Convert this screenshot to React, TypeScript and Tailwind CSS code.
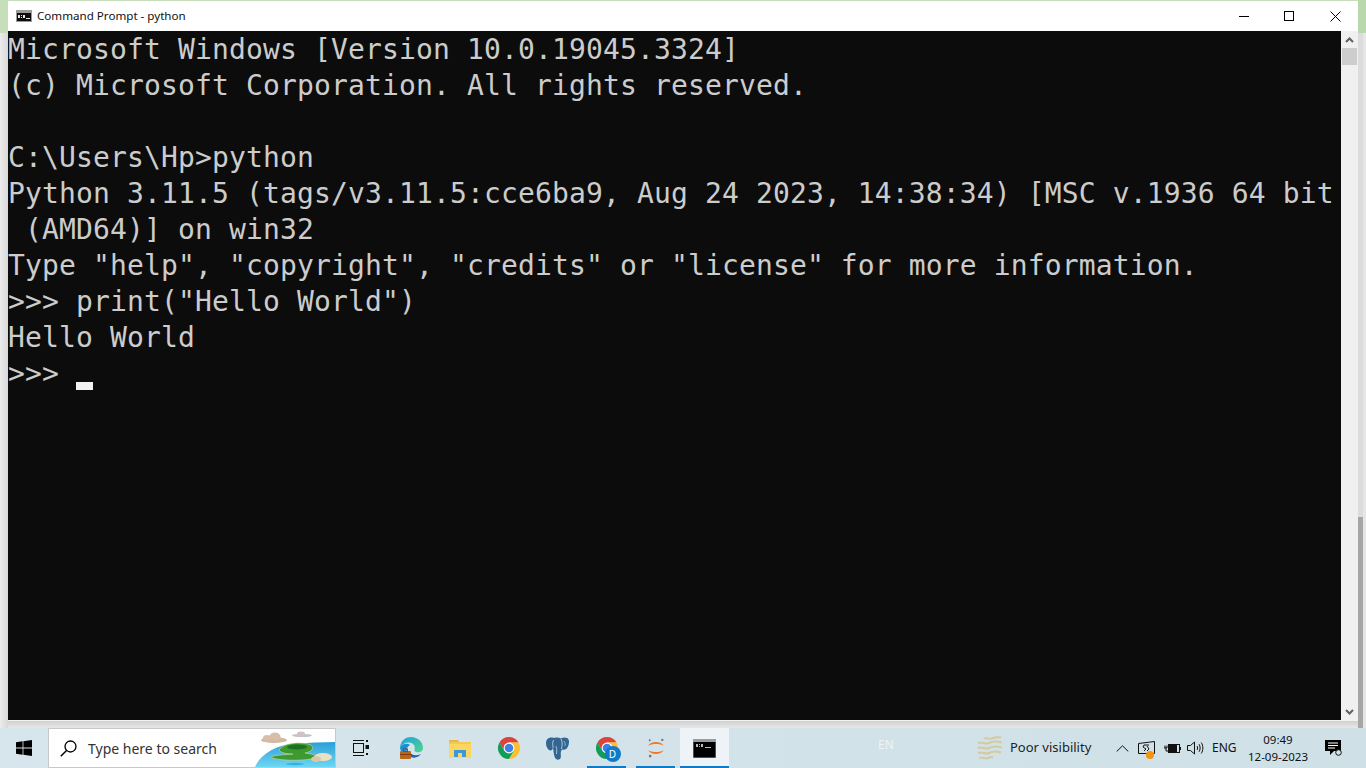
import React from 'react';

const lines = [
  'Microsoft Windows [Version 10.0.19045.3324]',
  '(c) Microsoft Corporation. All rights reserved.',
  '',
  'C:\\Users\\Hp>python',
  'Python 3.11.5 (tags/v3.11.5:cce6ba9, Aug 24 2023, 14:38:34) [MSC v.1936 64 bit',
  ' (AMD64)] on win32',
  'Type "help", "copyright", "credits" or "license" for more information.',
  '>>> print("Hello World")',
  'Hello World',
];

const ChromeIcon: React.FC<{ size?: number }> = ({ size = 24 }) => (
  <svg width={size} height={size} viewBox="0 0 24 24">
    <path d="M12 1A11 11 0 0 1 21.53 6.5L12 6.5 7.24 14.75 2.47 6.5A11 11 0 0 1 12 1Z" fill="#db4437" />
    <path d="M21.53 6.5A11 11 0 0 1 12 23L16.76 14.75 12 6.5Z" fill="#fbc02d" />
    <path d="M12 23A11 11 0 0 1 2.47 6.5L7.24 14.75 16.76 14.75Z" fill="#0f9d58" />
    <circle cx="12" cy="12" r="5.4" fill="#fff" />
    <circle cx="12" cy="12" r="4.3" fill="#3f7fe8" />
  </svg>
);

const TaskButton: React.FC<{ children: React.ReactNode; running?: boolean; active?: boolean }> = ({
  children,
  running,
  active,
}) => (
  <div className={`relative flex h-10 w-[49px] items-center justify-center ${active ? 'bg-[#edf3f6]' : ''}`}>
    {children}
    {running && (
      <div className={`absolute bottom-0 h-[2px] bg-[#0f7bc8] ${active ? 'inset-x-0' : 'inset-x-[5px]'}`}></div>
    )}
  </div>
);

export default function App() {
  return (
    <div className="flex h-[768px] w-[1366px] flex-col overflow-hidden bg-[#e4e4e4] font-['Noto_Sans',sans-serif]">
      <div className="flex h-[728px]">
        {/* left edge of the desktop */}
        <div className="flex w-2 flex-col">
          <div className="h-[33px] bg-[#c6dfba]"></div>
          <div className="flex-1 bg-gradient-to-r from-[#ececec] to-[#d8d8d8]"></div>
        </div>

        {/* window */}
        <div className="flex w-[1350px] flex-col">
          <div className="h-px bg-[#c6dfba]"></div>
          <div className="flex h-[30px] items-center bg-white">
            <svg width="16" height="12" viewBox="0 0 16 12" className="ml-2 mr-[5px]">
              <rect width="16" height="12" fill="#9a9a9a" />
              <rect x="1" y="3" width="14" height="8" fill="#0c0c0c" />
              <rect x="2" y="5" width="2" height="3" fill="#e8e8e8" />
              <rect x="5" y="5" width="1" height="1" fill="#e8e8e8" />
              <rect x="5" y="7" width="1" height="1" fill="#e8e8e8" />
              <rect x="7" y="5" width="2" height="3" fill="#e8e8e8" />
              <rect x="10" y="8" width="4" height="1" fill="#e8e8e8" />
            </svg>
            <span className="text-[11.6px] text-[#111]">Command Prompt - python</span>
            <div className="ml-auto flex items-center">
              <svg width="10" height="10" viewBox="0 0 10 10" className="mr-[35px]">
                <rect y="5" width="10" height="1" fill="#000" />
              </svg>
              <svg width="10" height="10" viewBox="0 0 10 10" className="mr-[36px]">
                <rect x="0.5" y="0.5" width="9" height="9" fill="none" stroke="#000" />
              </svg>
              <svg width="11" height="11" viewBox="0 0 11 11" className="mr-[17px]">
                <path d="M0.5 0.5L10.5 10.5M10.5 0.5L0.5 10.5" stroke="#000" strokeWidth="1" fill="none" />
              </svg>
            </div>
          </div>
          <div className="flex h-[689px]">
            <div className="flex-1 whitespace-pre bg-[#0c0c0c] pt-px font-['DejaVu_Sans_Mono',monospace] text-[28px] leading-[36px] tracking-[0.14px] text-[#cccccc]">
              {lines.map((line, i) => (
                <div key={i} className="h-9">
                  {line}
                </div>
              ))}
              <div className="flex h-9">
                <span>{'>>> '}</span>
                <span className="mb-[2px] h-2 w-[17px] self-end bg-[#f2f2f2]"></span>
              </div>
            </div>
            {/* scrollbar */}
            <div className="flex w-[17px] flex-col items-center bg-[#f0f0f0]">
              <div className="flex h-[17px] items-center justify-center">
                <svg width="9" height="6" viewBox="0 0 9 6">
                  <path d="M1 5L4.5 1.5 8 5" stroke="#606060" strokeWidth="2" fill="none" />
                </svg>
              </div>
              <div className="h-[17px] w-[15px] bg-[#cdcdcd]"></div>
              <div className="mt-auto flex h-[17px] items-center justify-center">
                <svg width="9" height="6" viewBox="0 0 9 6">
                  <path d="M1 1L4.5 4.5 8 1" stroke="#606060" strokeWidth="2" fill="none" />
                </svg>
              </div>
            </div>
          </div>
          <div className="h-px bg-[#f2f2f2]"></div>
          <div className="flex-1 bg-gradient-to-b from-[#d0d0d0] to-[#e8e8e8]"></div>
        </div>

        {/* right edge of the desktop */}
        <div className="flex w-2 flex-col">
          <div className="h-[33px] bg-[#b9d8ac]"></div>
          <div className="flex flex-1 flex-col bg-[#e6e6e6]">
            <div className="h-[484px] w-[5px] bg-[#dcdcdc]"></div>
            <div className="w-[5px] flex-1 bg-[#a6a6a6]"></div>
          </div>
        </div>
      </div>

      {/* taskbar */}
      <div className="flex h-10 items-center bg-gradient-to-r from-[#d7e5ec] to-[#cfe0e7]">
        <div className="flex h-10 w-12 items-center justify-center">
          <svg width="16" height="16" viewBox="0 0 16 16">
            <path d="M0 2.2L6.6 1.3V7.6H0ZM7.4 1.2L16 0V7.6H7.4ZM0 8.4H6.6V14.7L0 13.8ZM7.4 8.4H16V16L7.4 14.8Z" fill="#000" />
          </svg>
        </div>

        {/* search box */}
        <div className="relative flex h-10 w-[288px] items-center overflow-hidden border border-[#c6c9cb] bg-white">
          <svg width="17" height="17" viewBox="0 0 17 17" className="ml-[11px]">
            <circle cx="10.5" cy="6.5" r="5.5" fill="none" stroke="#000" strokeWidth="1.3" />
            <path d="M6.5 10.5L0.8 16.2" stroke="#000" strokeWidth="1.5" />
          </svg>
          <span className="ml-[11px] text-[14px] text-[#333]">Type here to search</span>
          <svg width="80" height="39" viewBox="0 0 80 39" className="absolute bottom-0 right-0">
            <defs>
              <linearGradient id="sea" x1="0" y1="0" x2="0" y2="1">
                <stop offset="0" stopColor="#2a9fd8" />
                <stop offset="1" stopColor="#6fd6f2" />
              </linearGradient>
            </defs>
            <ellipse cx="19" cy="12" rx="13" ry="3" fill="#d2b8a2" />
            <ellipse cx="20" cy="8.5" rx="5.5" ry="4" fill="#d8bda8" />
            <ellipse cx="12" cy="10" rx="4" ry="3" fill="#d8bda8" />
            <ellipse cx="47" cy="7.5" rx="10" ry="1.6" fill="#c8c2c4" />
            <ellipse cx="46" cy="5.5" rx="4" ry="2" fill="#cfc4c2" />
            <path d="M0 39C5 27 20 17 40 15.5 54 14.5 68 14.5 80 14V39Z" fill="url(#sea)" />
            <path d="M24 22C28 15 46 13 56 17 60 20 56 24 50 25 56 26 64 27 60 30 50 33 28 33 17 30 15 27 28 27 38 26 32 26 26 25 24 22Z" fill="#3c9a2e" stroke="#d8d59a" strokeWidth="0.6" />
            <ellipse cx="42" cy="19" rx="10" ry="2.5" fill="#1f6f22" />
            <ellipse cx="68" cy="29" rx="9" ry="4" fill="#ece0c4" />
            <ellipse cx="61" cy="31" rx="5" ry="3" fill="#d9c8a4" />
            <ellipse cx="40" cy="36" rx="9" ry="1.2" fill="#39aee0" />
          </svg>
        </div>

        {/* task view */}
        <div className="flex h-10 w-[50px] items-center justify-center">
          <svg width="16" height="16" viewBox="0 0 16 16" fill="none" stroke="#111" strokeWidth="1">
            <path d="M0 0.5H11M0 15.5H11" />
            <rect x="0.5" y="3.5" width="10" height="9" />
            <rect x="13" y="0" width="2" height="2" fill="#111" stroke="none" />
            <rect x="12.5" y="5" width="3.5" height="4" fill="#111" stroke="none" />
            <rect x="13" y="13" width="2" height="2" fill="#111" stroke="none" />
          </svg>
        </div>

        <TaskButton>
          <svg width="24" height="24" viewBox="0 0 24 24">
            <defs>
              <linearGradient id="edgeA" x1="0" y1="0" x2="1" y2="1">
                <stop offset="0" stopColor="#1f9fe0" />
                <stop offset="1" stopColor="#4fd68a" />
              </linearGradient>
            </defs>
            <path d="M1 11C2 4 7 1 12 1 19 1 24 6 24 12 24 16 20 17 17 16 14 15 17 12 15 9 12 5 5 6 1 11Z" fill="url(#edgeA)" />
            <path d="M1 11C4 7 9 7 11 9 7 11 7 16 9 19 5 19 1 16 1 11Z" fill="#1a8fd8" />
            <path d="M9 19C14 24 20 21 22 18 18 20 13 20 11 16Z" fill="#1565b8" />
            <rect x="1" y="15" width="11" height="8" rx="1" fill="#b9651b" />
            <rect x="4.5" y="13" width="4" height="2.5" fill="none" stroke="#8d4b12" />
            <rect x="1" y="18" width="11" height="1" fill="#7a3f0e" />
          </svg>
        </TaskButton>
        <TaskButton>
          <svg width="22" height="19" viewBox="0 0 22 19">
            <path d="M0 1H9L10 3H0Z" fill="#e8b93e" />
            <rect y="3" width="22" height="16" fill="#fbd661" />
            <rect y="3" width="22" height="2" fill="#f4c950" />
            <path d="M5 11H17V18H13V14H9V18H5Z" fill="#3d97dc" />
          </svg>
        </TaskButton>
        <TaskButton>
          <ChromeIcon />
        </TaskButton>
        <TaskButton>
          <svg width="23" height="23" viewBox="0 0 23 23">
            <path d="M6 0.5C2 0.5 0 2.5 0 6 0 9.5 2 13.5 4.5 13.5 6 13.5 6.5 12 7 11 7.5 14 7.8 17 8.5 19.5 9 22 11 23 13 22.5 15 22 15 19.5 14.8 17.5 14.7 15 15 14 16 12.5 18.5 13.5 21 12 22 9.5 23.5 6 23.5 2 21 1 19 0 17 0.5 15 1.5 13 0.3 10 0.3 8.5 1 8 0.7 7 0.5 6 0.5Z" fill="#336791" />
            <path d="M7.5 3C6 6 7 9 7.2 11M15 2C17 5 16 9 15.5 12M9.5 9C10.8 10 11 12 10.5 17" stroke="#cfdde8" strokeWidth="0.8" fill="none" />
            <path d="M18 4C19 6 19.5 7 19 9" stroke="#cfdde8" strokeWidth="0.6" fill="none" />
          </svg>
        </TaskButton>
        <TaskButton running>
          <div className="relative h-6 w-6">
            <ChromeIcon />
            <div className="absolute -bottom-[2px] -right-[2px] flex h-4 w-4 items-center justify-center rounded-full bg-[#0f7bc8] text-[10px] text-white">
              D
            </div>
          </div>
        </TaskButton>
        <TaskButton running>
          <svg width="18" height="22" viewBox="0 0 20 24">
            <path d="M1.5 9.5C3.5 4 16 4 18.5 9.5 15 6.8 5 6.8 1.5 9.5Z" fill="#f37726" />
            <path d="M1.5 14.5C3.5 20 16 20 18.5 14.5 15 17.2 5 17.2 1.5 14.5Z" fill="#f37726" />
            <circle cx="17" cy="3" r="1.3" fill="#767677" />
            <circle cx="3" cy="3.5" r="1.1" fill="#767677" />
            <circle cx="3.5" cy="21" r="1.5" fill="#767677" />
          </svg>
        </TaskButton>
        <TaskButton running active>
          <svg width="23" height="19" viewBox="0 0 23 19">
            <rect width="23" height="19" fill="#9c9c9c" />
            <rect x="0.5" y="3" width="22" height="15.5" fill="#000" />
            <rect x="3" y="5" width="2" height="3" fill="#bbb" />
            <rect x="6" y="5" width="1" height="1" fill="#bbb" />
            <rect x="6" y="7" width="1" height="1" fill="#bbb" />
            <rect x="8" y="5" width="2" height="3" fill="#bbb" />
            <rect x="12" y="8" width="6" height="1" fill="#bbb" />
          </svg>
        </TaskButton>

        <span className="-mt-[6px] ml-[149px] w-[100px] text-[12px] text-[#eef3f5]">EN</span>

        {/* weather */}
        <svg width="24" height="24" viewBox="0 0 24 24" fill="none" stroke="#d6c99f" strokeWidth="2">
          <path d="M6 2.5C9 1 11 4 14 2.5S20 1 23 1.5" />
          <path d="M0 7C4 5 7 9 11 7S19 5 24 6.5" />
          <path d="M0 12C4 10 7 14 11 12S19 10 24 11.5" />
          <path d="M0 17C4 15 7 19 11 17S19 15 23 16.5" />
          <path d="M1 22C4 20.5 7 23.5 10 22S13 21 15 21.5" />
        </svg>
        <span className="ml-2 text-[13px] text-[#222]">Poor visibility</span>

        {/* tray */}
        <div className="ml-auto flex items-center text-[#111]">
          <div className="flex w-6 justify-center pl-1">
            <svg width="13" height="7" viewBox="0 0 13 7">
              <path d="M0.7 6.5L6.5 0.8 12.3 6.5" stroke="#111" strokeWidth="1" fill="none" />
            </svg>
          </div>
          <div className="relative ml-[2px] flex w-6 justify-center">
            <svg width="17" height="15" viewBox="0 0 17 15" fill="none" stroke="#111">
              <path d="M0.5 2.5L16.5 0.5V12.5H0.5Z" />
              <path d="M11 4L6 4 5 6 8 8 6 10M9 5L11 8 9 10" strokeWidth="1" />
            </svg>
            <div className="absolute -bottom-[3px] right-[4px] h-2 w-2 rounded-full bg-[#f7930f]"></div>
          </div>
          <div className="ml-[2px] flex w-6 justify-center">
            <svg width="17" height="11" viewBox="0 0 17 11">
              <path d="M0 5H3M1 2.5V5M3 2.5V5M2 5V8H4" stroke="#111" fill="none" />
              <rect x="4.5" y="1.5" width="11" height="8" fill="none" stroke="#111" />
              <rect x="5" y="2" width="8" height="7" fill="#111" />
              <rect x="16" y="4" width="1" height="3" fill="#111" />
            </svg>
          </div>
          <div className="flex w-[22px] justify-center">
            <svg width="17" height="14" viewBox="0 0 17 14" fill="none" stroke="#111">
              <path d="M0.5 4.5H3.5L7.5 1V13L3.5 9.5H0.5Z" />
              <path d="M10 5C10.8 6 10.8 8 10 9M12 3.2C13.5 5.2 13.5 8.8 12 10.8M14.2 1.5C16.4 4.5 16.4 9.5 14.2 12.5" />
            </svg>
          </div>
          <span className="ml-[6px] w-[25px] text-[12px]">ENG</span>
          <div className="ml-[11px] flex w-[60px] flex-col items-center whitespace-nowrap text-[11.5px] leading-[17px]">
            <span>09:49</span>
            <span>12-09-2023</span>
          </div>
          <div className="ml-[12px] mr-5 flex w-[26px] justify-center">
            <svg width="17" height="16" viewBox="0 0 17 16">
              <path d="M0 0H16V11H9L5 15V11H0Z" fill="#000" />
              <path d="M3 3H13M3 5.5H13M3 8H10" stroke="#fff" strokeWidth="1" />
              <circle cx="13.5" cy="12.5" r="2.8" fill="#d3e2e8" stroke="#111" />
            </svg>
          </div>
        </div>
      </div>
    </div>
  );
}
